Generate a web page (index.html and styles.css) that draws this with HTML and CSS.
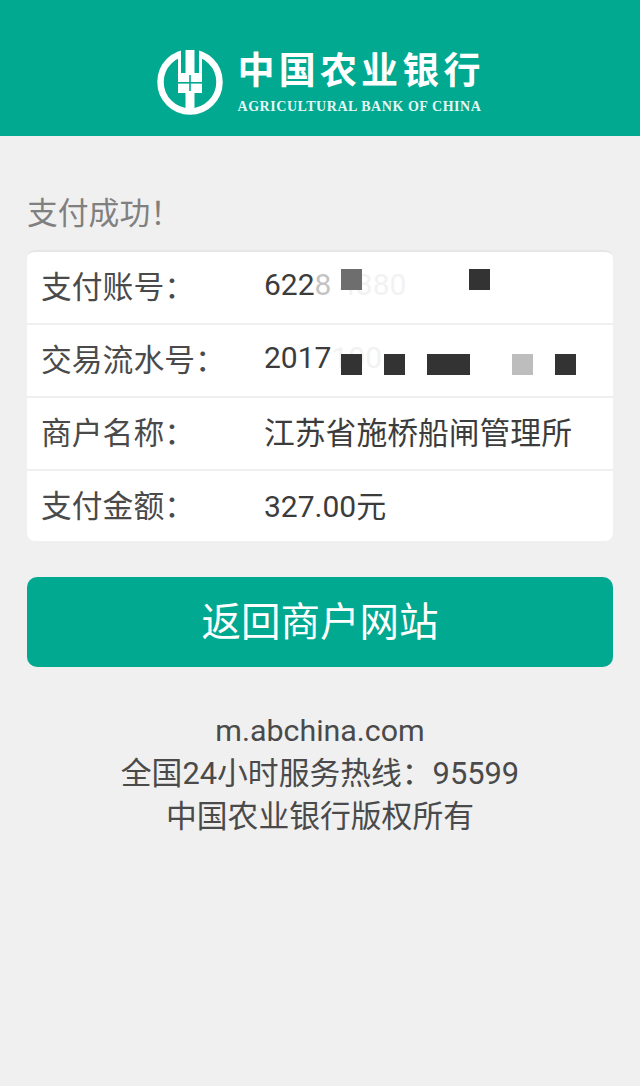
FILE: index.html
```html
<!DOCTYPE html>
<html lang="zh">
<head>
<meta charset="utf-8">
<title>支付成功</title>
<link rel="stylesheet" href="styles.css">
</head>
<body>
<header class="top">
  <svg class="emblem" viewBox="0 0 66 66" width="66" height="66" aria-hidden="true">
    <circle cx="33" cy="33" r="29.5" fill="none" stroke="#fff" stroke-width="6.5"/>
    <rect x="24" y="0" width="18" height="25" fill="#00a98f"/>
    <rect x="21" y="4" width="3" height="21" fill="#fff"/>
    <rect x="42" y="4" width="3" height="21" fill="#fff"/>
    <rect x="28.5" y="1" width="9" height="23" fill="#fff"/>
    <rect x="21" y="24" width="24" height="20" fill="#fff"/>
    <rect x="28.5" y="44" width="9" height="19" fill="#fff"/>
    <rect x="32.2" y="26" width="1.6" height="16" fill="#00a98f"/>
    <rect x="21" y="33" width="24" height="1.6" fill="#00a98f"/>
  </svg>
  <div class="brand">
    <div class="brand-cn">中国农业银行</div>
    <div class="brand-en">AGRICULTURAL BANK OF CHINA</div>
  </div>
</header>
<main class="content">
  <h1 class="status">支付成功！</h1>
  <div class="card">
    <div class="row">
      <span class="label">支付账号：</span>
      <span class="value masked">
        <span class="digits">622<span class="part">8</span><span class="ghost"> 4380</span></span>
        <i class="blk b1"></i>
        <i class="blk b2"></i>
      </span>
    </div>
    <div class="row">
      <span class="label">交易流水号：</span>
      <span class="value masked">
        <span class="digits">2017<span class="ghost">100</span></span>
        <i class="blk b3"></i>
        <i class="blk b4"></i>
        <i class="blk b5"></i>
        <i class="blk b6"></i>
        <i class="blk b7"></i>
      </span>
    </div>
    <div class="row">
      <span class="label">商户名称：</span>
      <span class="value cjk">江苏省施桥船闸管理所</span>
    </div>
    <div class="row">
      <span class="label">支付金额：</span>
      <span class="value">327.00元</span>
    </div>
  </div>
  <a class="btn" href="#">返回商户网站</a>
  <footer class="foot">
    <p class="foot-url">m.abchina.com</p>
    <p>全国24小时服务热线：95599</p>
    <p>中国农业银行版权所有</p>
  </footer>
</main>
</body>
</html>
```
FILE: styles.css
```css
* { box-sizing: border-box; }
html, body { margin: 0; padding: 0; }
body {
  width: 640px;
  height: 1086px;
  overflow: hidden;
  background: #f0f0f0;
  color: #333;
  font-family: Roboto, "Noto Sans CJK SC", sans-serif;
  font-size: 30.8px;
}
.top {
  height: 136px;
  background: #00a98f;
  display: flex;
  align-items: center;
  justify-content: center;
  gap: 15px;
  padding: 26px 2px 0 0;
  color: #fff;
}
.emblem { flex: none; margin-top: 2px; }
.brand { width: 244px; margin-top: 1px; }
.brand-cn {
  font-family: "Noto Sans CJK SC", sans-serif;
  font-weight: 700;
  font-size: 37px;
  line-height: 40px;
  letter-spacing: 4.2px;
  white-space: nowrap;
}
.brand-en {
  font-family: "Liberation Serif", serif;
  font-weight: 700;
  font-size: 14px;
  line-height: 16px;
  margin-top: 11px;
  letter-spacing: 0.55px;
  white-space: nowrap;
  opacity: .9;
}
.content { padding: 0 27px; }
.status {
  margin: 0;
  padding-top: 57px;
  height: 114px;
  font-size: 30.8px;
  line-height: 42px;
  font-weight: 400;
  color: #808080;
}
.card {
  background: #fff;
  border-radius: 8px;
  overflow: hidden;
  border-top: 2px solid #e6e6e6;
}
.row {
  height: 73px;
  display: flex;
  align-items: center;
  padding: 0 0 7px 14px;
  border-bottom: 2px solid #efefef;
  white-space: nowrap;
}
.row:last-child { border-bottom: 0; height: 70px; padding-bottom: 5px; }
.label { width: 223px; flex: none; color: #4a4a4a; }
.value { color: #3c3c3c; font-size: 30px; }
.cjk { font-size: 30.8px; }
.masked { position: relative; flex: 1; align-self: stretch; display: flex; align-items: center; }
.part { opacity: .3; }
.ghost { color: #f2f2f2; }
.blk { position: absolute; width: 21px; height: 21px; background: #333; top: 17px; }
.b1 { left: 77px; background: #6e6e6e; }
.b2 { left: 205px; }
.b3 { left: 77px; top: 29px; }
.b4 { left: 120px; top: 29px; }
.b5 { left: 163px; width: 43px; top: 29px; }
.b6 { left: 248px; top: 29px; background: #bdbdbd; }
.b7 { left: 291px; top: 29px; }
.btn {
  display: flex;
  align-items: center;
  justify-content: center;
  height: 90px;
  margin-top: 36px;
  padding-bottom: 8px;
  border-radius: 10px;
  background: #00a98f;
  color: #fff;
  font-size: 39.5px;
  text-decoration: none;
}
.foot {
  margin-top: 42px;
  text-align: center;
  font-size: 30.8px;
  line-height: 43px;
  color: #4a4a4a;
}
.foot p { margin: 0; }
.foot .foot-url { font-size: 30.4px; }
```
